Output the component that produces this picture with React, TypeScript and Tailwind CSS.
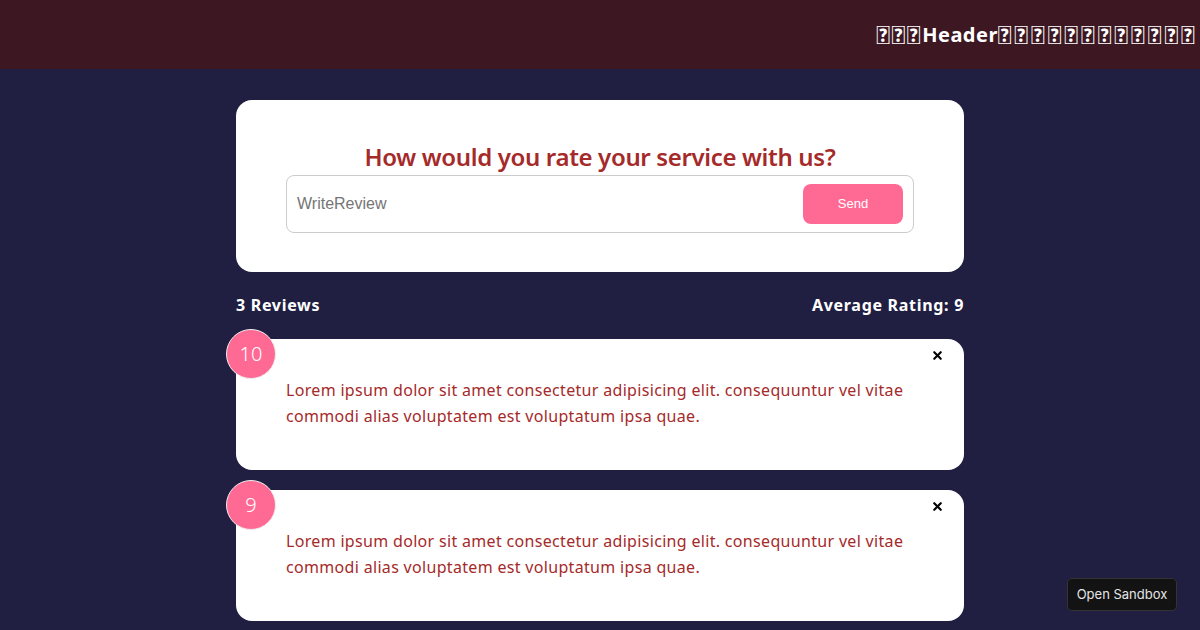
import React, { useState } from 'react';
import { X } from 'lucide-react';

interface Review {
  id: number;
  rating: number;
  text: string;
}

const reviews: Review[] = [
  { id: 1, rating: 10, text: 'Lorem ipsum dolor sit amet consectetur adipisicing elit. consequuntur vel vitae commodi alias voluptatem est voluptatum ipsa quae.' },
  { id: 2, rating: 9, text: 'Lorem ipsum dolor sit amet consectetur adipisicing elit. consequuntur vel vitae commodi alias voluptatem est voluptatum ipsa quae.' },
  { id: 3, rating: 8, text: 'Lorem ipsum dolor sit amet consectetur adipisicing elit. consequuntur vel vitae commodi alias voluptatem est voluptatum ipsa quae.' },
];

// glyphs the page's fonts don't carry, so they show as boxes like the original
const missing = (n: number) => Array.from({ length: n }, (_, i) => String.fromCodePoint(0xf0000 + i)).join('');

function ReviewCard({ review }: { review: Review }) {
  return (
    <div className="relative bg-white rounded-[16px] h-[131px] px-[50px] pt-[38px] shrink-0">
      <div className="absolute -left-[10px] -top-[10px] w-[50px] h-[50px] rounded-full bg-[#ff6a95] border border-[#eee] flex items-center justify-center text-white text-[20px] font-light">
        {review.rating}
      </div>
      <button className="absolute right-[20px] top-[10px] text-black">
        <X className="w-[13px] h-[13px]" strokeWidth={4} />
      </button>
      <p className="text-[#a52a2a] text-[16px] leading-[26px] tracking-[0.32px]">{review.text}</p>
    </div>
  );
}

export default function App() {
  const [text, setText] = useState('');
  const avg = 9;

  return (
    <div className="h-[630px] overflow-hidden bg-[#201f42] font-['Noto_Sans',sans-serif]">
      <header className="h-[69px] bg-[#3d1823] flex items-center justify-end overflow-hidden whitespace-nowrap">
        <h1 className="text-white text-[20px] font-bold mr-[2px] flex items-center leading-none">
          <span className="font-['Lato',sans-serif] text-[25px] tracking-[1.5px]">{missing(3)}</span>
          <span className="tracking-[0.5px]">Header</span>
          <span className="font-['Lato',sans-serif] text-[25px] tracking-[3px]">{missing(12)}</span>
        </h1>
      </header>

      <main className="w-[728px] mx-auto pt-[31px] flex flex-col">
        <div className="bg-white rounded-[16px] h-[172px] px-[50px] pt-[40px]">
          <h2 className="text-center text-[#a52a2a] text-[24px] font-semibold leading-[34px] mb-[1px] tracking-[-0.35px]">
            How would you rate your service with us?
          </h2>
          <div className="flex items-center h-[58px] border border-[#ccc] rounded-[8px] pl-[10px] pr-[10px]">
            <input
              value={text}
              onChange={(e) => setText(e.target.value)}
              placeholder="WriteReview"
              className="flex-1 outline-none text-[16px] font-['Liberation_Sans',sans-serif] placeholder:text-[#757575]"
            />
            <button className="w-[100px] h-[40px] rounded-[8px] bg-[#ff6a95] text-white text-[13px] font-['Liberation_Sans',sans-serif]">
              Send
            </button>
          </div>
        </div>

        <div className="flex justify-between text-white font-bold text-[16px] mt-[20px] mb-[21px] leading-[26px] tracking-[0.7px]">
          <span>{reviews.length} Reviews</span>
          <span>Average Rating: {avg}</span>
        </div>

        <div className="flex flex-col gap-[20px]">
          {reviews.map((r) => (
            <ReviewCard key={r.id} review={r} />
          ))}
        </div>
      </main>

      <button className="fixed right-[23px] bottom-[19px] h-[33px] w-[110px] rounded-[5px] bg-[#131313] border border-[#333] text-[#e5e5e5] text-[13px] font-['Inter',sans-serif]">
        Open Sandbox
      </button>
    </div>
  );
}
